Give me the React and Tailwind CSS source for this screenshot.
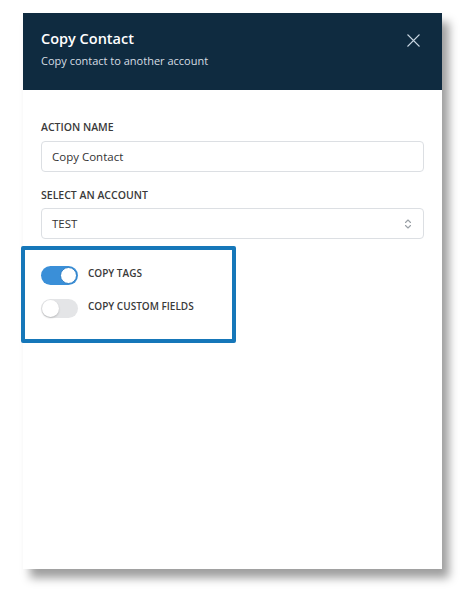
import { useState } from "react";

function Toggle({ on }) {
    return (
        <div
            className={
                on
                    ? "w-[37px] h-[19px] rounded-full bg-[#3a8fd8] flex items-center justify-end pr-[1px]"
                    : "w-[37px] h-[19px] rounded-full bg-[#e4e5e7] flex items-center justify-start pl-[1px]"
            }
        >
            <div
                className={
                    on
                        ? "w-[17px] h-[17px] rounded-full bg-white border border-[#2f7fc4]"
                        : "w-[17px] h-[17px] rounded-full bg-white shadow-[0_1px_2px_rgba(0,0,0,0.2)]"
                }
            />
        </div>
    );
}

export default function App() {
    const [name, setName] = useState("Copy Contact");

    return (
        <div
            className="min-h-screen bg-white pt-[13px] pl-[23px]"
            style={{ fontFamily: "'Open Sans', 'Liberation Sans', sans-serif" }}
        >
            {/* PANEL */}
            <div className="w-[419px] h-[556px] bg-white flex flex-col shadow-[7px_9px_9px_rgba(0,0,0,0.38)]">

                {/* HEADER */}
                <div className="h-[77px] bg-[#0f2b40] px-[18px] pt-[16px] flex justify-between">
                    <div className="flex flex-col">
                        <h1 className="text-[14.5px] leading-[20px] font-semibold text-white">
                            Copy Contact
                        </h1>
                        <p className="text-[11px] leading-[16px] text-[#d6dde3] mt-[4px]">
                            Copy contact to another account
                        </p>
                    </div>
                    <svg
                        className="w-[15px] h-[15px] mt-[4px] mr-[3px] text-[#c9d6e2]"
                        viewBox="0 0 16 16"
                        fill="none"
                        stroke="currentColor"
                        strokeWidth={1.5}
                        strokeLinecap="round"
                    >
                        <path d="M2 2L14 14M14 2L2 14" />
                    </svg>
                </div>

                {/* BODY */}
                <div className="flex flex-col pl-[18px] pr-[18px] pt-[29px]">
                    <label className="text-[10.5px] leading-[16px] font-semibold text-[#3a3a3a]">
                        ACTION NAME
                    </label>
                    <input
                        value={name}
                        onChange={(e) => setName(e.target.value)}
                        className="mt-[6px] h-[31px] w-full border border-[#dcdfe3] rounded-[4px] px-[10px] text-[11.5px] text-[#333] outline-none"
                    />

                    <label className="mt-[15px] text-[10.5px] leading-[16px] font-semibold text-[#3a3a3a]">
                        SELECT AN ACCOUNT
                    </label>
                    <div className="mt-[5px] h-[31px] w-full border border-[#dcdfe3] rounded-[4px] pl-[10px] pr-[11px] flex items-center justify-between">
                        <span className="text-[11.5px] text-[#333]">TEST</span>
                        <svg
                            className="w-[8px] h-[12px] text-[#9aa0a6]"
                            viewBox="0 0 8 12"
                            fill="none"
                            stroke="currentColor"
                            strokeWidth={1.1}
                            strokeLinecap="round"
                            strokeLinejoin="round"
                        >
                            <path d="M1.5 4.5L4 2L6.5 4.5M1.5 7.5L4 10L6.5 7.5" />
                        </svg>
                    </div>

                    {/* HIGHLIGHTED TOGGLES */}
                    <div className="-ml-[20px] mt-[7px] w-[215px] h-[97px] border-4 border-[#1677b9] rounded-[2px] pl-[16px] pt-[16px] flex flex-col gap-[14px]">
                        <div className="flex items-center gap-[10px]">
                            <Toggle on />
                            <span className="text-[10px] font-semibold text-[#3a3a3a] -mt-[4px]">
                                COPY TAGS
                            </span>
                        </div>
                        <div className="flex items-center gap-[10px]">
                            <Toggle />
                            <span className="text-[10px] font-semibold text-[#3a3a3a] -mt-[4px]">
                                COPY CUSTOM FIELDS
                            </span>
                        </div>
                    </div>
                </div>

            </div>
        </div>
    );
}
